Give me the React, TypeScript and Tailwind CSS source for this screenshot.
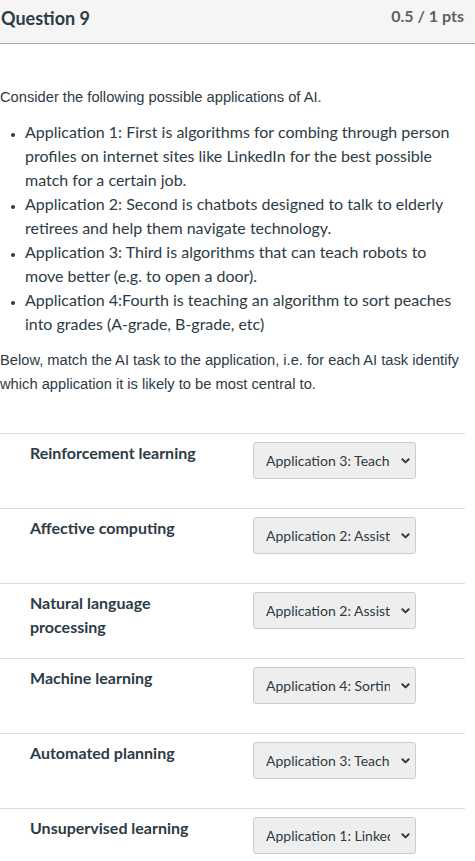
import { useState } from "react";

const apps = [
  "Application 1: LinkedIn matching",
  "Application 2: Assisting elderly",
  "Application 3: Teaching robots",
  "Application 4: Sorting peaches",
];

const rows: { label: string; answer: number }[] = [
  { label: "Reinforcement learning", answer: 2 },
  { label: "Affective computing", answer: 1 },
  { label: "Natural language processing", answer: 1 },
  { label: "Machine learning", answer: 3 },
  { label: "Automated planning", answer: 2 },
  { label: "Unsupervised learning", answer: 0 },
];

function MatchSelect({ initial }: { initial: number }) {
  const [value, setValue] = useState(apps[initial]);
  return (
    <div className="relative ml-[43px] mt-[8px] h-[37px] w-[163px] shrink-0">
      <select
        value={value}
        onChange={(e) => setValue(e.target.value)}
        className="h-full w-full appearance-none rounded-[3px] border border-[#c7cdd1] bg-[#eeeeee] pb-[1px] pl-[12px] pr-[25px] font-['Lato',sans-serif] text-[14px] text-[#2d3b45] outline-none"
      >
        {apps.map((a) => (
          <option key={a} value={a}>
            {a}
          </option>
        ))}
      </select>
      <svg
        className="pointer-events-none absolute right-[6px] top-[15px] h-[8px] w-[9px]"
        viewBox="0 0 10 8"
        fill="none"
      >
        <path d="M1.5 2 L5 5.5 L8.5 2" stroke="#2d3b45" strokeWidth="2.2" strokeLinecap="round" strokeLinejoin="round" />
      </svg>
    </div>
  );
}

export default function App() {
  return (
    <div className="min-h-screen bg-white text-[#2d3b45]">
      <div className="flex h-[44px] items-start justify-between border-b border-[#aaaaaa] bg-[#f5f5f5] pr-[11px] font-['Lato',sans-serif] font-bold">
        <h2 className="pl-[1px] pt-[6px] text-[18px] leading-[24px] text-[#2d3b45]">Question 9</h2>
        <span className="pt-[4px] text-[16px] leading-[24px] text-[#5b6063]">0.5 / 1 pts</span>
      </div>

      <div className="w-[465px]">
        <p className="pt-[41px] font-['Liberation_Sans',Arial,sans-serif] text-[14.7px] leading-[24px]">
          Consider the following possible applications of AI.
        </p>
        <ul className="mt-[11px] list-disc pl-[25px] font-['Lato',sans-serif] text-[16px] leading-[24px] marker:text-[11px]">
          <li>
            Application 1: First is algorithms for combing through person profiles on internet sites like
            LinkedIn for the best possible match for a certain job.
          </li>
          <li>Application 2: Second is chatbots designed to talk to elderly retirees and help them navigate technology.</li>
          <li>Application 3: Third is algorithms that can teach robots to move better (e.g. to open a door).</li>
          <li>Application 4:Fourth is teaching an algorithm to sort peaches into grades (A-grade, B-grade, etc)</li>
        </ul>
        <p className="mt-[12px] font-['Liberation_Sans',Arial,sans-serif] text-[14.7px] leading-[24px]">
          Below, match the AI task to the application, i.e. for each AI task identify which application it is
          likely to be most central to.
        </p>

        <div className="mt-[37px]">
          {rows.map((r) => (
            <div key={r.label} className="flex h-[75px] border-t border-[#dddddd] pl-[30px]">
              <div className="w-[180px] shrink-0 pt-[7px] font-['Lato',sans-serif] text-[16px] font-bold leading-[24px]">
                {r.label}
              </div>
              <MatchSelect initial={r.answer} />
            </div>
          ))}
        </div>
      </div>
    </div>
  );
}
